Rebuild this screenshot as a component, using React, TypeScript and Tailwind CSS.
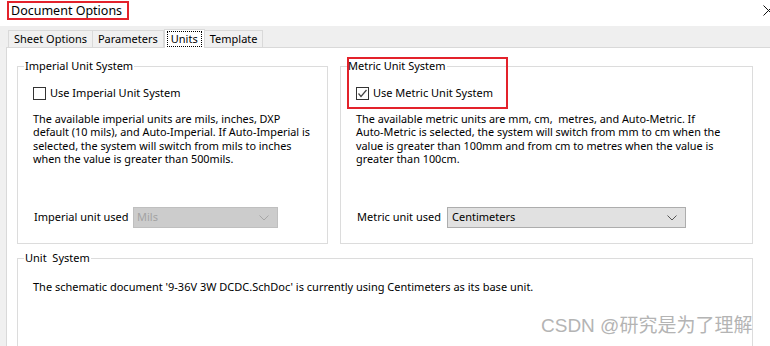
import { ReactNode } from 'react';

const font = { fontFamily: '"Noto Sans", "Noto Sans CJK SC", sans-serif' };

type CheckProps = { checked?: boolean; label: string };

const CheckRow = ({ checked, label }: CheckProps) => (
    <div className="flex items-center h-[14px]">
        <span className="w-[13px] h-[13px] border border-[#333333] bg-white flex items-center justify-center">
            {checked && (
                <svg width="11" height="11" viewBox="0 0 11 11">
                    <polyline
                        points="1.5,5.5 4,8.5 9.5,2"
                        fill="none"
                        stroke="#444444"
                        strokeWidth="1.2"
                    />
                </svg>
            )}
        </span>
        <span className="ml-[4px] text-[11px] leading-[14px] whitespace-nowrap text-black">{label}</span>
    </div>
);

const Chevron = ({ color }: { color: string }) => (
    <svg width="10" height="6" viewBox="0 0 10 6">
        <polyline points="0.5,0.5 5,5 9.5,0.5" fill="none" stroke={color} strokeWidth="1" />
    </svg>
);

type SelectProps = { value: string; disabled?: boolean };

const FakeSelect = ({ value, disabled }: SelectProps) => (
    <div
        className={
            disabled
                ? 'h-[21px] w-[145px] border border-[#bfbfbf] bg-[#cccccc] flex items-center justify-between pl-[3px] pr-[8px]'
                : 'h-[21px] w-[239px] border border-[#adadad] bg-[#e1e1e1] flex items-center justify-between pl-[4px] pr-[8px]'
        }
    >
        <span className={disabled ? 'text-[11px] text-[#a3a3a3]' : 'text-[11px] text-black'}>{value}</span>
        <Chevron color={disabled ? '#a6a6a6' : '#555555'} />
    </div>
);

const Group = ({ title, children, className }: { title: string; children: ReactNode; className?: string }) => (
    <fieldset className={'border border-[#dcdcdc] px-[15px] ' + (className ?? '')}>
        <legend className="ml-[-9px] px-[1px] text-[11px] leading-[16px] whitespace-pre text-black">{title}</legend>
        {children}
    </fieldset>
);

const Lines = ({ lines }: { lines: string[] }) => (
    <p className="mt-[12px] h-[95px] text-[10.85px] leading-[13.4px] text-black whitespace-pre">
        {lines.map((l) => (
            <span key={l} className="block">
                {l}
            </span>
        ))}
    </p>
);

const tabs = ['Sheet Options', 'Parameters', 'Units', 'Template'];

export default function App() {
    return (
        <div className="relative w-[770px] h-[346px] overflow-hidden bg-white" style={font}>
            {/* title bar */}
            <div className="h-[26px] flex items-start justify-between">
                <div className="mt-[1px] ml-[7px] w-[122px] h-[19px] border-2 border-[#e3222b] flex items-center pl-[2px]">
                    <span className="text-[12.5px] leading-[16px] whitespace-nowrap text-black">Document Options</span>
                </div>
                <svg className="mt-[5px] mr-[-4px]" width="11" height="11" viewBox="0 0 11 11">
                    <path d="M0.5 0.5 L10.5 10.5 M10.5 0.5 L0.5 10.5" stroke="#111111" strokeWidth="1" />
                </svg>
            </div>

            {/* tab strip */}
            <div className="h-[21px] bg-[#efefef] flex items-end pl-[8px]">
                {tabs.map((t) =>
                    t === 'Units' ? (
                        <div
                            key={t}
                            className="relative z-10 h-[19px] mb-[-1px] bg-white border border-b-0 border-[#d9d9d9] px-[2px] pt-[1px]"
                        >
                            <span className="block border border-dotted border-black px-[3px] text-[11px] leading-[14px] text-black">
                                {t}
                            </span>
                        </div>
                    ) : (
                        <div
                            key={t}
                            className="h-[17px] bg-[#f0f0f0] border border-b-0 border-l-0 first:border-l border-[#d9d9d9] px-[5px] flex items-center text-[11px] text-black"
                        >
                            {t}
                        </div>
                    ),
                )}
            </div>

            {/* panel */}
            <div className="flex h-[299px]">
                <div className="w-[7px] bg-[#f0f0f0]" />
                <div className="flex-1 border-l border-t border-[#d9d9d9] bg-white pl-[10px] pr-[17px] pt-[10px]">
                    <div className="grid grid-cols-[311px_413px] gap-x-[12px]">
                        <Group title="Imperial Unit System" className="h-[186px]">
                            <div className="mt-[12px]">
                                <CheckRow label="Use Imperial Unit System" />
                            </div>
                            <Lines
                                lines={[
                                    'The available imperial units are mils, inches, DXP',
                                    'default (10 mils), and Auto-Imperial. If Auto-Imperial is',
                                    'selected, the system will switch from mils to inches',
                                    'when the value is greater than 500mils.',
                                ]}
                            />
                            <div className="flex items-center">
                                <span className="w-[100px] pl-[1px] text-[11px] whitespace-nowrap text-black">
                                    Imperial unit used
                                </span>
                                <FakeSelect value="Mils" disabled />
                            </div>
                        </Group>
                        <Group title="Metric Unit System" className="h-[186px]">
                            <div className="mt-[12px]">
                                <CheckRow checked label="Use Metric Unit System" />
                            </div>
                            <Lines
                                lines={[
                                    'The available metric units are mm, cm,  metres, and Auto-Metric. If',
                                    'Auto-Metric is selected, the system will switch from mm to cm when the',
                                    'value is greater than 100mm and from cm to metres when the value is',
                                    'greater than 100cm.',
                                ]}
                            />
                            <div className="flex items-center">
                                <span className="w-[91px] pl-[1px] text-[11px] whitespace-nowrap text-black">
                                    Metric unit used
                                </span>
                                <FakeSelect value="Centimeters" />
                            </div>
                        </Group>
                    </div>
                    <Group title="Unit  System" className="mt-[6px] h-[120px]">
                        <p className="mt-[14px] text-[11px] leading-[14px] text-black whitespace-pre">
                            The schematic document '9-36V 3W DCDC.SchDoc' is currently using Centimeters as its base unit.
                        </p>
                    </Group>
                </div>
            </div>

            {/* red annotation around metric checkbox */}
            <div className="absolute left-[347px] top-[57px] w-[161px] h-[52px] border-2 border-[#e3222b] pointer-events-none" />

            {/* watermark */}
            <div
                className="absolute left-[541px] top-[314px] text-[19px] leading-[24px] text-[#b4b4b4] whitespace-nowrap"
                style={{ fontFamily: '"Liberation Sans", "Noto Sans CJK SC", sans-serif' }}
            >
                CSDN @研究是为了理解
            </div>
        </div>
    );
}
